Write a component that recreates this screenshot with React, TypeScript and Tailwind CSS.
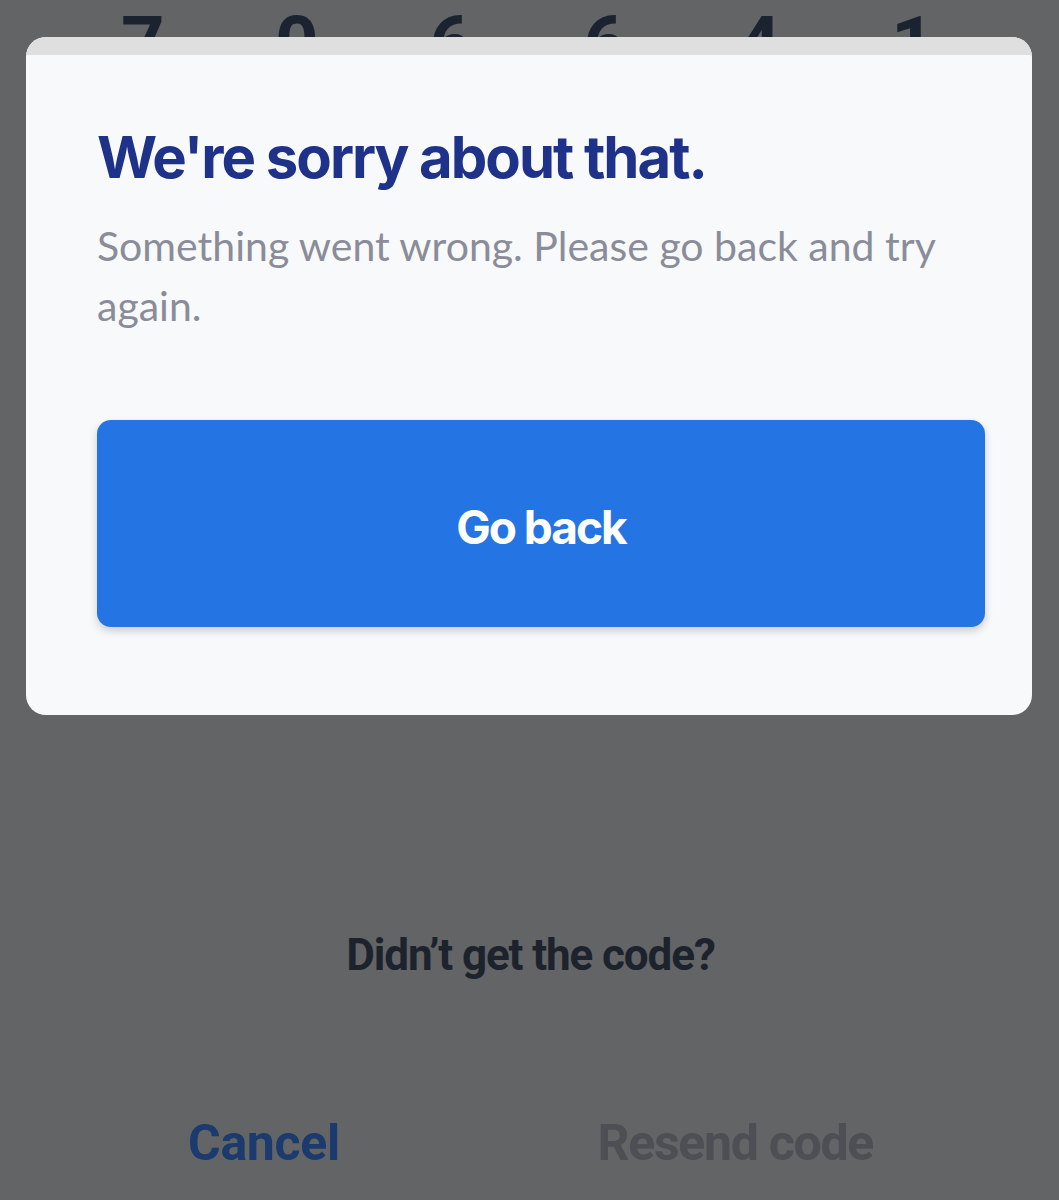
import React from "react";

export default function App() {
  const digits = ["7", "0", "6", "6", "4", "1"];
  return (
    <div className="relative w-[1059px] h-[1200px] overflow-hidden bg-[#636466]" style={{ fontFamily: "Inter, 'Noto Sans', sans-serif" }}>
      {/* background digits */}
      <div className="flex pl-[121px] pt-[6px]">
        {digits.map((d, i) => (
          <div key={i} className="w-[154px] text-[76px] font-bold leading-none text-[#1b2330]" style={{ fontFamily: "Roboto, sans-serif" }}>
            {d}
          </div>
        ))}
      </div>

      {/* bottom content */}
      <div className="absolute left-0 right-0 top-[922px] flex justify-center">
        <div className="pl-[2px] text-[44px] font-bold text-[#1c232d] tracking-[-1.1px]" style={{ fontFamily: "Roboto, sans-serif" }}>
          Didn’t get the code?
        </div>
      </div>
      <div className="absolute left-0 right-0 top-[1106px] flex">
        <div className="w-1/2 pl-[188px] text-[50px] font-bold text-[#1b3a6e] tracking-[-0.3px]" style={{ fontFamily: "Roboto, sans-serif" }}>
          Cancel
        </div>
        <div className="w-1/2 pl-[68px] text-[50px] font-bold text-[#4d4f55] tracking-[-1.3px]" style={{ fontFamily: "Roboto, sans-serif" }}>
          Resend code
        </div>
      </div>

      {/* modal */}
      <div className="absolute left-[26px] top-[37px] w-[1006px] h-[678px] rounded-[20px] overflow-hidden bg-[#f8f9fb] flex flex-col">
        <div className="h-[18px] bg-[#dfdfdf]" />
        <div className="px-[71px] pt-[67px]">
          <h1 className="text-[58px] font-bold text-[#1f3289] tracking-[-2px] leading-[70px]">We're sorry about that.</h1>
          <p className="mt-[24px] w-[870px] text-[41px] text-[#8a8d99] leading-[60px]" style={{ fontFamily: "Lato, sans-serif" }}>
            Something went wrong. Please go back and try again.
          </p>
          <button className="mt-[84px] w-[888px] h-[207px] rounded-[14px] bg-[#2475e3] shadow-[0_4px_8px_rgba(0,0,0,0.18)] flex items-center justify-center">
            <span className="pt-[8px] text-[46px] font-bold text-white tracking-[-2px]">Go back</span>
          </button>
        </div>
      </div>
    </div>
  );
}
